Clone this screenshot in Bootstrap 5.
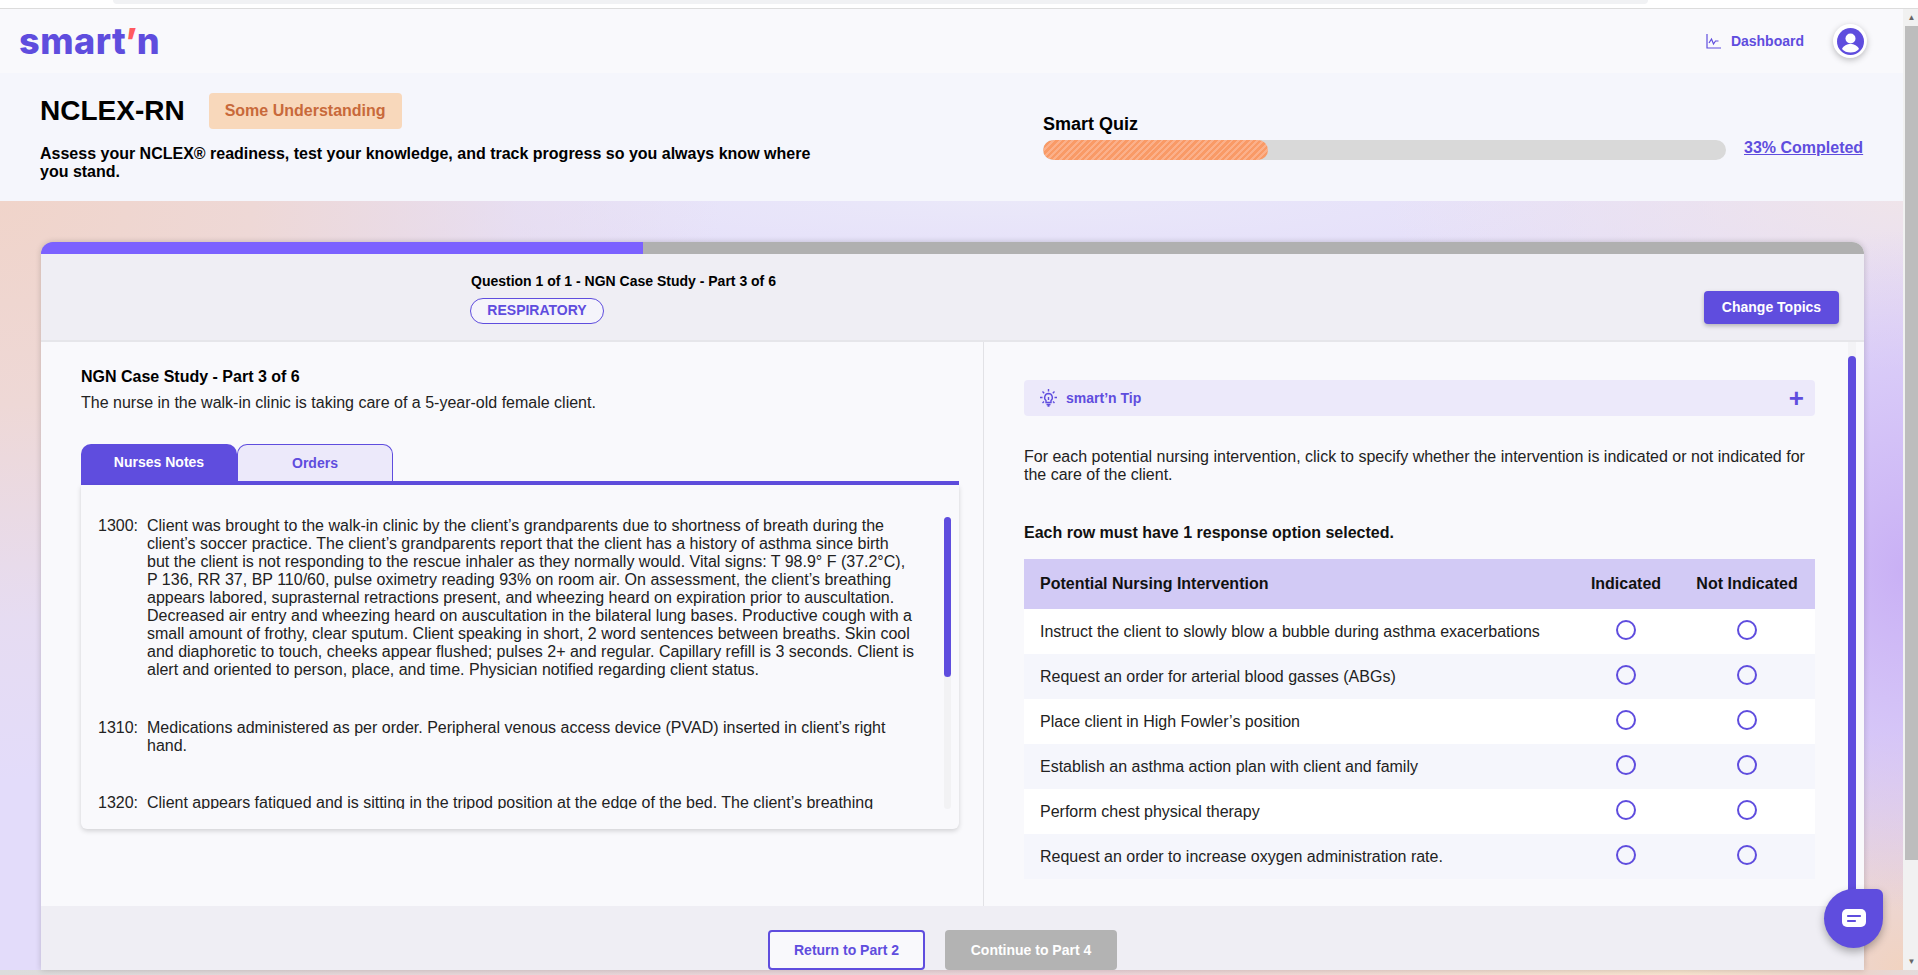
<!DOCTYPE html>
<html lang="en">
<head>
<meta charset="utf-8">
<title>smart'n NCLEX-RN</title>
<link href="https://cdn.jsdelivr.net/npm/bootstrap@5.3.0/dist/css/bootstrap.min.css" rel="stylesheet">
<style>
html,body{height:975px;overflow:hidden;margin:0}
body{font-family:"Liberation Sans",Arial,sans-serif;color:#111;background:#fff}
.chrome-strip{height:9px;background:#fff;border-bottom:1px solid #dcdcdc;padding-left:113px;padding-right:270px}
.chrome-pill{height:4px;background:#f1f2f4;border-radius:0 0 8px 8px}
.viewport{height:961px}
.page{flex:1 1 auto;min-width:0;display:flex;flex-direction:column;height:961px}
.vscroll{width:15px;background:#f1f1f1;flex:none;display:flex;flex-direction:column;align-items:flex-end}
.vscroll-arrow{height:17px;width:13px;text-align:center;font-size:8px;line-height:17px;color:#666;flex:none}
.vscroll-thumb{width:13px;height:834px;background:#bdbdbd;flex:none}
.bottom-strip{height:5px;background:linear-gradient(90deg,#dcdcdc 0,#e6d8da 350px,#edd4d9 1100px,#f8e4cf 1680px,#ecd3cb 1860px,#e4dcdc 1918px)}
.topnav{height:64px;background:#f9f9fc;padding:0 36px 0 19px;flex:none}
.logo{font-family:Inter,sans-serif;font-weight:800;font-size:36px;line-height:1;letter-spacing:.5px;color:#5f4dde}
.logo-apos{color:#ff5a5f;margin:0 -1px}
.dash-link{font-size:14px;font-weight:700;color:#5f4dde;text-decoration:none;gap:10px}
.avatar{width:34px;height:34px;border-radius:50%;background:#fff;box-shadow:0 2px 6px rgba(0,0,0,.25);margin-left:29px}
.hero{height:128px;background:#f5f6fc;padding:20px 39px 0 40px;flex:none}
.hero-left{width:1003px;flex:none}
.hero-title{font-size:28px;font-weight:700;margin:0;color:#000;line-height:36px}
.level-tag{background:#f8d8bb;color:#c8693a;font-weight:700;font-size:16px;border-radius:4px;height:36px;line-height:36px;padding:0 16px;margin-left:24px}
.hero-sub{font-size:16px;font-weight:700;line-height:18px;margin:16px 0 0;color:#000;width:775px}
.hero-right{flex:1 1 auto;padding-top:20px}
.quiz-name{font-size:18px;font-weight:700;color:#000;line-height:22px;margin-bottom:5px}
.quiz-track{height:20px;width:683px;border-radius:10px;background:#d9d9d9;flex:none}
.quiz-fill{width:225px;background-color:#fa9e6e;background-image:repeating-linear-gradient(135deg,#f99a66 0 2.500px,#fbb08a 2.500px 4.500px);border-radius:10px}
.quiz-done{font-size:16px;font-weight:700;color:#5f4dde;margin:-4px 0 0 18px;text-decoration:underline}
.stage{flex:1 1 auto;padding:41px 39px 0 41px;min-height:0;background-color:#e3dcfa;
background-image:
radial-gradient(ellipse 240px 340px at 1903px 369px,#c9b0f5 0,rgba(201,176,245,0) 100%),
radial-gradient(ellipse 260px 240px at 1903px 769px,#f1d3c0 0,rgba(241,211,192,0) 100%),
radial-gradient(ellipse 520px 170px at 1903px 0,#efe4ea 0,rgba(239,228,234,0) 100%),
radial-gradient(ellipse 720px 580px at 0 0,#f0d4ca 0,#eed8d6 35%,rgba(232,220,236,.6) 72%,rgba(227,220,250,0) 100%),
radial-gradient(ellipse 900px 90px at 1000px 0,#eae8f9 0,rgba(234,232,249,0) 100%);}
.quiz-card{height:728px;border:0;border-radius:12px 12px 0 0;overflow:hidden;box-shadow:0 0 6px rgba(0,0,0,.18);background:#f9f9fc;display:flex;flex-direction:column}
.card-progress{height:12px;border-radius:0;background:#b0b0b0;flex:none}
.card-progress .progress-bar{width:33%;background:#7b61ff}
.q-head{height:88px;background:#efeef4;border-bottom:2px solid #e6e6ea;padding:0 25px 0 430px;flex:none}
.q-title{font-size:14px;font-weight:700;line-height:16px;color:#000;margin-top:19px}
.topic-pill{display:inline-block;border:1.5px solid #5f4dde;border-radius:14px;height:26px;line-height:23px;width:134px;text-align:center;color:#5f4dde;font-size:14px;font-weight:700;margin:9px 0 0 -1px;background:#f5f4fb}
.btn-topics{background:#5f4dde;color:#fff;font-size:14px;font-weight:700;width:135px;height:33px;border-radius:4px;padding:0;box-shadow:0 2px 4px rgba(0,0,0,.25);border:0;margin-top:37px}
.q-body{flex:1 1 auto;min-height:0;display:flex}
.pane-left{width:943px;flex:none;border-right:1px solid #e2e2e6;padding:26px 24px 0 40px}
.case-h{font-size:16px;font-weight:700;line-height:18px;color:#000}
.case-p{font-size:16px;line-height:18px;margin:8px 0 0;color:#222}
.tab-row{margin-top:32px;border-bottom:4px solid #5f4dde;height:41px;flex-wrap:nowrap}
.tab-row .nav-link{font-size:14px;font-weight:700;height:37px;line-height:37px;padding:0;text-align:center;border-radius:10px 10px 0 0;margin:0}
.tab-row .nav-link.active{width:156px;background:#5f4dde;color:#fff;border:0}
.tab-row .nav-link.off{width:156px;background:#ece9fa;color:#5f4dde;border:1px solid #5f4dde;border-bottom:0}
.notes-panel{height:344px;background:#f9f9fc;box-shadow:0 2px 5px rgba(0,0,0,.16);border-radius:0 0 6px 6px;padding:32px 8px 20px 17px;display:flex;gap:29px}
.notes-text{flex:1 1 auto;height:292px;overflow:hidden;font-size:16px;line-height:18px;color:#222}
.note-row{display:flex;margin-bottom:39.5px}
.note-time{width:49px;flex:none}
.notes-track{width:7px;height:292px;background:#f2f2f4;border-radius:4px;flex:none}
.notes-thumb{width:7px;height:160px;background:#5f4dde;border-radius:4px}
.pane-right{flex:1 1 auto;min-width:0;display:flex}
.right-inner{width:864px;flex:none;padding:38px 33px 0 40px}
.right-track{width:8px;background:#f3f3f6;flex:none;padding-top:14px}
.right-thumb{width:8px;height:640px;background:#5f4dde;border-radius:4px 4px 0 0}
.tip-bar{height:36px;background:#ece9fa;border-radius:4px;color:#5f4dde;font-size:14px;font-weight:700;padding:0 11px 0 16px}
.tip-gap{gap:9px}
.tip-plus{font-size:26px;font-weight:700;line-height:1}
.instr{font-size:16px;line-height:18px;margin:32px 0 0;color:#222}
.row-rule{font-size:16px;font-weight:700;line-height:18px;margin:40px 0 17px;color:#111}
.grid-tbl{margin:0;--bs-table-bg:transparent;border-collapse:collapse;table-layout:fixed}
.grid-tbl th{background:#d2caf5;height:50px;vertical-align:middle;font-size:16px;font-weight:700;color:#111;border:0;padding:0 16px}
.grid-tbl td{height:45px;vertical-align:middle;font-size:16px;color:#222;border:0;padding:0 16px}
.grid-tbl tbody tr:nth-child(odd) td{background:#fff}
.grid-tbl tbody tr:nth-child(even) td{background:#f5f6fc}
.grid-tbl .col-ind{width:106px;text-align:center;padding:0}
.grid-tbl .col-not{width:136px;text-align:center;padding:0}
.opt{width:20px;height:20px;margin:0 auto 4px;border:2px solid #5f4dde;background-color:transparent;display:block}
.q-foot{height:64px;background:#efeef4;flex:none;padding:24px 20px 0 0;gap:20px}
.btn-back,.btn-next{font-size:14px;font-weight:700;height:40px;border-radius:4px;padding:0}
.btn-back{width:157px;border:2px solid #5f4dde;color:#5f4dde;background:#f9f9fc}
.btn-next{width:172px;border:0;background:#b3b3b3;color:#fff}
.chat-fab{position:absolute;left:1824px;top:889px;width:59px;height:59px;border-radius:50% 6px 50% 50%;background:#5f4dde;box-shadow:0 4px 8px rgba(0,0,0,.3)}
</style>
</head>
<body>
<div class="chrome-strip"><div class="chrome-pill"></div></div>
<div class="viewport d-flex">
  <div class="page">
    <nav class="topnav d-flex align-items-center justify-content-between">
      <div class="logo">smart<span class="logo-apos">’</span>n</div>
      <div class="d-flex align-items-center">
        <a class="dash-link d-flex align-items-center" href="#">
          <svg width="15" height="15" viewBox="0 0 15 15" fill="none" stroke="#5f4dde" stroke-width="1.2"><path d="M1 0v14h14"/><path d="M3 9l2.500-4 2 5 2-3h3"/></svg>
          Dashboard
        </a>
        <div class="avatar d-flex align-items-center justify-content-center">
          <svg width="27" height="27" viewBox="0 0 27 27"><circle cx="13.500" cy="13.500" r="13.500" fill="#5f4dde"/><circle cx="13.500" cy="10.500" r="5" fill="#fff"/><path d="M5 21c1.500-3.500 5-5 8.500-5s7 1.500 8.500 5c-2 2.500-5 3.500-8.500 3.500S7 23.500 5 21z" fill="#fff"/></svg>
        </div>
      </div>
    </nav>
    <header class="hero d-flex">
      <div class="hero-left">
        <div class="d-flex align-items-center">
          <h1 class="hero-title">NCLEX-RN</h1>
          <span class="level-tag">Some Understanding</span>
        </div>
        <p class="hero-sub">Assess your NCLEX® readiness, test your knowledge, and track progress so you always know where you stand.</p>
      </div>
      <div class="hero-right">
        <div class="quiz-name">Smart Quiz</div>
        <div class="d-flex align-items-center">
          <div class="progress quiz-track"><div class="progress-bar quiz-fill"></div></div>
          <a class="quiz-done" href="#">33% Completed</a>
        </div>
      </div>
    </header>
    <main class="stage">
      <div class="card quiz-card">
        <div class="progress card-progress"><div class="progress-bar"></div></div>
        <div class="q-head d-flex justify-content-between align-items-start">
          <div>
            <div class="q-title">Question 1 of 1 - NGN Case Study - Part 3 of 6</div>
            <span class="topic-pill">RESPIRATORY</span>
          </div>
          <button class="btn btn-topics">Change Topics</button>
        </div>
        <div class="q-body">
          <section class="pane-left">
            <div class="case-h">NGN Case Study - Part 3 of 6</div>
            <p class="case-p">The nurse in the walk-in clinic is taking care of a 5-year-old female client.</p>
            <ul class="nav nav-tabs tab-row">
              <li class="nav-item"><a class="nav-link active" href="#">Nurses Notes</a></li>
              <li class="nav-item"><a class="nav-link off" href="#">Orders</a></li>
            </ul>
            <div class="notes-panel">
              <div class="notes-text">
                <div class="note-row"><div class="note-time">1300:</div><div>Client was brought to the walk-in clinic by the client’s grandparents due to shortness of breath during the client’s soccer practice. The client’s grandparents report that the client has a history of asthma since birth but the client is not responding to the rescue inhaler as they normally would. Vital signs: T 98.9° F (37.2°C), P 136, RR 37, BP 110/60, pulse oximetry reading 93% on room air. On assessment, the client’s breathing appears labored, suprasternal retractions present, and wheezing heard on expiration prior to auscultation. Decreased air entry and wheezing heard on auscultation in the bilateral lung bases. Productive cough with a small amount of frothy, clear sputum. Client speaking in short, 2 word sentences between breaths. Skin cool and diaphoretic to touch, cheeks appear flushed; pulses 2+ and regular. Capillary refill is 3 seconds. Client is alert and oriented to person, place, and time. Physician notified regarding client status.</div></div>
                <div class="note-row"><div class="note-time">1310:</div><div>Medications administered as per order. Peripheral venous access device (PVAD) inserted in client’s right hand.</div></div>
                <div class="note-row"><div class="note-time">1320:</div><div>Client appears fatigued and is sitting in the tripod position at the edge of the bed. The client’s breathing</div></div>
              </div>
              <div class="notes-track"><div class="notes-thumb"></div></div>
            </div>
          </section>
          <section class="pane-right">
            <div class="right-inner">
              <div class="tip-bar d-flex align-items-center justify-content-between">
                <span class="d-flex align-items-center tip-gap">
                  <svg width="17" height="18" viewBox="0 0 17 18" fill="none" stroke="#5f4dde" stroke-width="1.400"><path d="M8.500 4.500a4 4 0 0 1 2.500 7v2H6v-2a4 4 0 0 1 2.500-7z"/><path d="M6.500 15.500h4M7.500 17h2M8.500 8v3"/><path d="M8.500 0v2.500M2.500 2.500l1.700 1.700M14.500 2.500l-1.700 1.700M0 8.500h2.500M14.500 8.500H17M2.500 14l1.500-1.500M14.500 14L13 12.500"/></svg>
                  smart’n Tip
                </span>
                <span class="tip-plus">+</span>
              </div>
              <p class="instr">For each potential nursing intervention, click to specify whether the intervention is indicated or not indicated for the care of the client.</p>
              <p class="row-rule">Each row must have 1 response option selected.</p>
              <table class="table grid-tbl">
                <thead>
                  <tr><th>Potential Nursing Intervention</th><th class="col-ind">Indicated</th><th class="col-not">Not Indicated</th></tr>
                </thead>
                <tbody>
                  <tr><td>Instruct the client to slowly blow a bubble during asthma exacerbations</td><td class="col-ind"><input class="form-check-input opt" type="radio" name="r1" aria-label="Indicated"></td><td class="col-not"><input class="form-check-input opt" type="radio" name="r1" aria-label="Not Indicated"></td></tr>
                  <tr><td>Request an order for arterial blood gasses (ABGs)</td><td class="col-ind"><input class="form-check-input opt" type="radio" name="r2" aria-label="Indicated"></td><td class="col-not"><input class="form-check-input opt" type="radio" name="r2" aria-label="Not Indicated"></td></tr>
                  <tr><td>Place client in High Fowler’s position</td><td class="col-ind"><input class="form-check-input opt" type="radio" name="r3" aria-label="Indicated"></td><td class="col-not"><input class="form-check-input opt" type="radio" name="r3" aria-label="Not Indicated"></td></tr>
                  <tr><td>Establish an asthma action plan with client and family</td><td class="col-ind"><input class="form-check-input opt" type="radio" name="r4" aria-label="Indicated"></td><td class="col-not"><input class="form-check-input opt" type="radio" name="r4" aria-label="Not Indicated"></td></tr>
                  <tr><td>Perform chest physical therapy</td><td class="col-ind"><input class="form-check-input opt" type="radio" name="r5" aria-label="Indicated"></td><td class="col-not"><input class="form-check-input opt" type="radio" name="r5" aria-label="Not Indicated"></td></tr>
                  <tr><td>Request an order to increase oxygen administration rate.</td><td class="col-ind"><input class="form-check-input opt" type="radio" name="r6" aria-label="Indicated"></td><td class="col-not"><input class="form-check-input opt" type="radio" name="r6" aria-label="Not Indicated"></td></tr>
                </tbody>
              </table>
            </div>
            <div class="right-track"><div class="right-thumb"></div></div>
          </section>
        </div>
        <footer class="q-foot d-flex justify-content-center align-items-start">
          <button class="btn btn-back">Return to Part 2</button>
          <button class="btn btn-next">Continue to Part 4</button>
        </footer>
      </div>
    </main>
  </div>
  <div class="vscroll">
    <div class="vscroll-arrow">▲</div>
    <div class="vscroll-thumb"></div>
    <div class="flex-grow-1"></div>
    <div class="vscroll-arrow">▼</div>
  </div>
</div>
<div class="bottom-strip"></div>
<div class="chat-fab d-flex align-items-center justify-content-center">
  <svg width="24" height="20" viewBox="0 0 24 20"><rect x="0" y="0" width="24" height="18" rx="5" fill="#fff"/><path d="M6 7h12M6 12h7" stroke="#5f4dde" stroke-width="2.200" stroke-linecap="round"/></svg>
</div>
<script src="https://cdn.jsdelivr.net/npm/bootstrap@5.3.0/dist/js/bootstrap.bundle.min.js"></script>
</body>
</html>
